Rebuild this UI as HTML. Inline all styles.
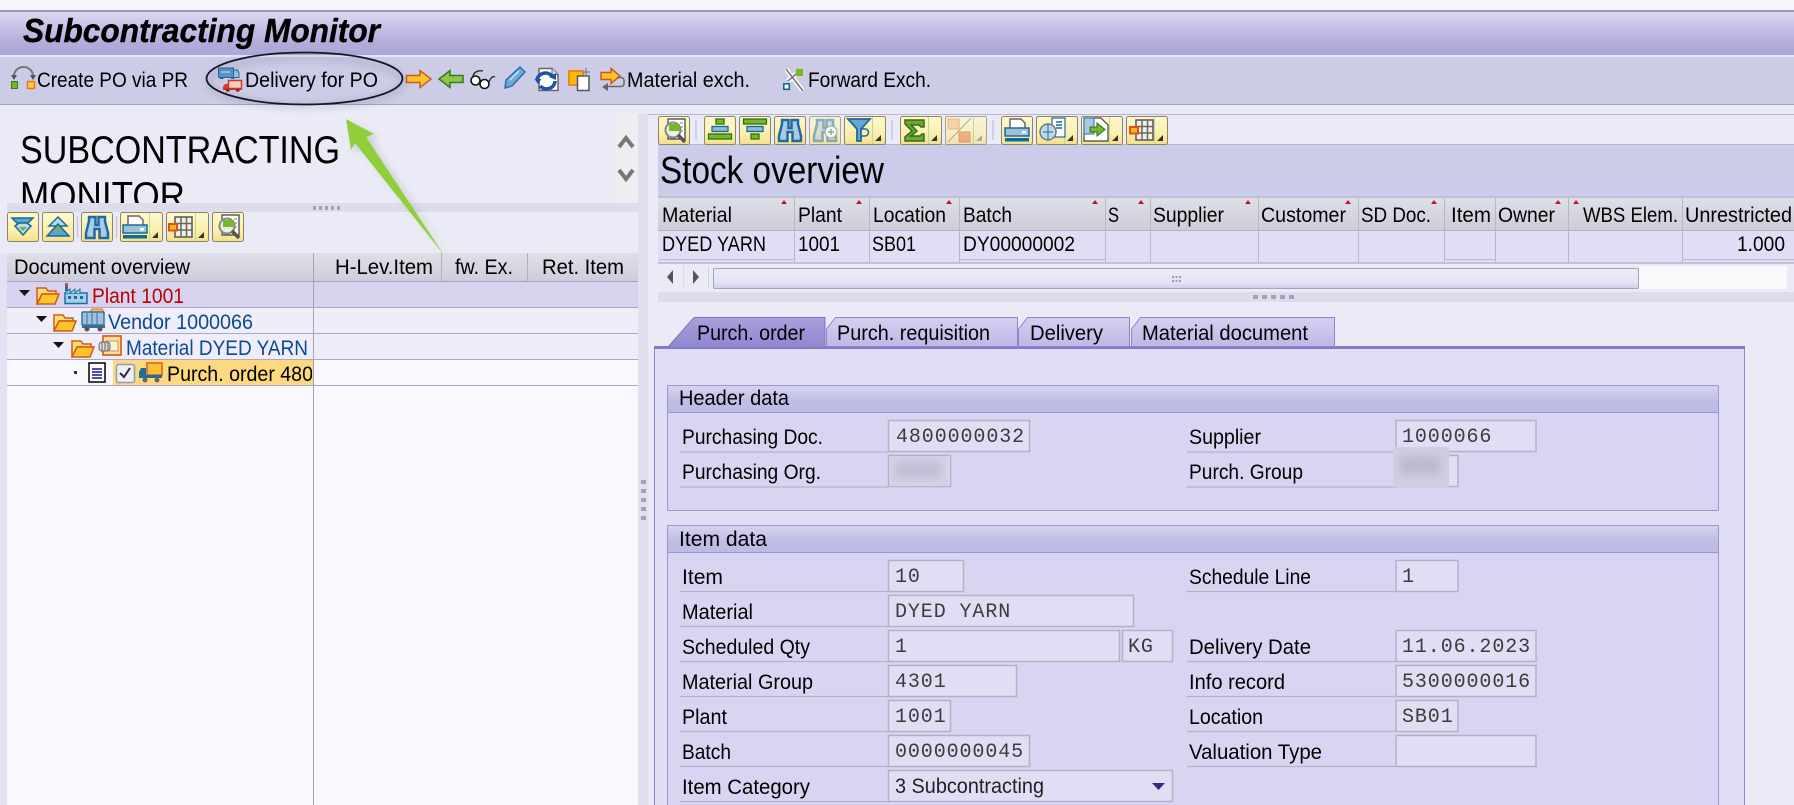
<!DOCTYPE html>
<html><head><meta charset="utf-8"><title>Subcontracting Monitor</title>
<style>
html,body{margin:0;padding:0;width:1794px;height:805px;overflow:hidden;background:#ebebf7}
svg{display:block;position:absolute;left:0;top:0}
text{font-family:"Liberation Sans",sans-serif;font-size:21px;fill:#000;white-space:pre}
.m{font-family:"Liberation Mono",monospace;font-size:20px;letter-spacing:.9px;fill:#3c3c3c}
.b{fill:#0a4a96}
.r{shape-rendering:crispEdges}
.fd{fill:#e0def5;stroke:#b3b1c4;stroke-width:1.5}
.ul{stroke:#b5b3c4;stroke-width:1.2}
</style></head><body>
<svg width="1794" height="805" viewBox="0 0 1794 805" xmlns="http://www.w3.org/2000/svg">
<defs>
<linearGradient id="gT" x1="0" y1="0" x2="0" y2="1"><stop offset="0" stop-color="#dad7f0"/><stop offset=".75" stop-color="#b1abda"/><stop offset="1" stop-color="#aea8d8"/></linearGradient>
<linearGradient id="gB" x1="0" y1="0" x2="0" y2="1"><stop offset="0" stop-color="#fdf8cf"/><stop offset=".6" stop-color="#fbf0ae"/><stop offset="1" stop-color="#f4e08c"/></linearGradient>
<linearGradient id="gH" x1="0" y1="0" x2="0" y2="1"><stop offset="0" stop-color="#dfdfe8"/><stop offset="1" stop-color="#cdcdd9"/></linearGradient>
<linearGradient id="gG" x1="0" y1="0" x2="0" y2="1"><stop offset="0" stop-color="#d6d3f0"/><stop offset=".6" stop-color="#bfbce5"/><stop offset="1" stop-color="#bdbae4"/></linearGradient>
<linearGradient id="gTa" x1="0" y1="0" x2="0" y2="1"><stop offset="0" stop-color="#a9a1dd"/><stop offset="1" stop-color="#8f86d0"/></linearGradient>
<linearGradient id="gTb" x1="0" y1="0" x2="0" y2="1"><stop offset="0" stop-color="#d4d0f0"/><stop offset="1" stop-color="#bdb8e6"/></linearGradient>
<linearGradient id="gS" x1="0" y1="0" x2="0" y2="1"><stop offset="0" stop-color="#ececf8"/><stop offset=".7" stop-color="#e4e2f5"/><stop offset="1" stop-color="#cfcde6"/></linearGradient>
<filter id="bl" x="-30%" y="-30%" width="160%" height="160%"><feGaussianBlur stdDeviation="4"/></filter>
<filter id="sh" x="-20%" y="-40%" width="140%" height="180%"><feGaussianBlur stdDeviation="4"/></filter>
<clipPath id="cH"><rect x="0" y="105" width="614" height="98"/></clipPath>
<clipPath id="cP"><rect x="113" y="360" width="199" height="25"/></clipPath>
<symbol id="iFold" viewBox="0 0 24 18" overflow="visible"><path d="M1 1h9l2 3h8v3H6L1 17z" fill="#fde07a" stroke="#d4581a" stroke-width="1.5"/><path d="M1 17L6 7h17l-4 10z" fill="#fdc52c" stroke="#d4581a" stroke-width="1.5"/></symbol>
<symbol id="iBin" viewBox="0 0 24 24" overflow="visible"><path d="M4 2h6.500v8h3V2H20v4l3 12v5h-8.500v-9h-5v9H1v-5L4 6z" fill="#a9cbe4" stroke="#1f6aa5" stroke-width="2.500"/></symbol>
<symbol id="iPrn" viewBox="0 0 26 24" overflow="visible"><path d="M6 1h11l4 4v6H6z" fill="#fff" stroke="#666" stroke-width="1.5"/><rect x="1" y="10" width="24" height="8" fill="#9ec0db" stroke="#1a6a96" stroke-width="1.5"/><rect x="18" y="13" width="4" height="2.5" fill="#fff"/><rect x="1" y="20" width="24" height="3.5" fill="#0e6a96"/></symbol>
<symbol id="iGrid" viewBox="0 0 26 24" overflow="visible"><rect x="7" y="2" width="17" height="20" fill="#f3f0e0" stroke="#555" stroke-width="1.5"/><path d="M7 8.5h17M7 15h17M13 2v20M18.5 2v20" stroke="#666" stroke-width="1.5"/><rect x="1" y="9" width="8" height="6.5" fill="#fdb913" stroke="#e0521a" stroke-width="2"/></symbol>
<symbol id="iZoom" viewBox="0 0 24 26" overflow="visible"><rect x="5" y="1" width="17" height="20" fill="#fff" stroke="#444" stroke-width="1.3"/><path d="M17 5h3M17 9h3M17 13h3" stroke="#777"/><circle cx="10" cy="12" r="7.5" fill="#e8f2e0" stroke="#888" stroke-width="2"/><rect x="6" y="6" width="11" height="7" fill="#76b82a"/><path d="M15 17l7 7" stroke="#555" stroke-width="3.5"/></symbol>
</defs>

<!-- top chrome -->
<rect class="r" x="0" y="0" width="1794" height="10" fill="#f5f5fa"/>
<rect class="r" x="0" y="10" width="1794" height="2" fill="#9c96c6"/>
<rect class="r" x="0" y="12" width="1794" height="43" fill="url(#gT)"/>
<rect class="r" x="0" y="55" width="1794" height="2" fill="#e6e5f4"/>
<rect class="r" x="0" y="57" width="1794" height="47" fill="#cdcce6"/>
<rect class="r" x="0" y="104" width="1794" height="1" fill="#a5a3c4"/>
<text x="23" y="42" font-weight="bold" font-style="italic" style="font-size:33px;stroke:#000;stroke-width:.4px" textLength="357" lengthAdjust="spacingAndGlyphs">Subcontracting Monitor</text>

<text x="37" y="87" textLength="151" lengthAdjust="spacingAndGlyphs">Create PO via PR</text>
<text x="245" y="87" textLength="133" lengthAdjust="spacingAndGlyphs">Delivery for PO</text>
<text x="627" y="87" textLength="123" lengthAdjust="spacingAndGlyphs">Material exch.</text>
<text x="808" y="87" textLength="123" lengthAdjust="spacingAndGlyphs">Forward Exch.</text>

<!-- toolbar icons -->
<g>
<path d="M14 77v-1a9.500 9 0 0 1 19 0v1" fill="none" stroke="#777" stroke-width="2"/>
<path d="M11 75h6l-3 5zM30 75h6l-3 5z" fill="#555"/>
<rect x="11.500" y="81.500" width="6" height="7" fill="#74b52f" stroke="#3c7a1c"/>
<rect x="27.500" y="81.500" width="7" height="7" fill="#fbd030" stroke="#ea7a20" stroke-width="1.5"/>
<!-- delivery -->
<rect x="218.500" y="68" width="15" height="9.500" fill="#5b97c6" stroke="#1d6ba3"/><rect x="221" y="71" width="9" height="2" fill="#9cc4e2"/>
<path d="M233.500 70h4l1.500 3v4.500h-5.500z" fill="#8fc2e2" stroke="#1d6ba3"/>
<rect x="220" y="77" width="3.500" height="2" fill="#1d6ba3"/><rect x="231" y="77" width="3.500" height="2" fill="#1d6ba3"/>
<rect x="228.500" y="80.500" width="13" height="8" fill="#f6cdbd" stroke="#c83a20" stroke-width="1.500"/>
<path d="M228 84h-3l-2 2.500v2.500h5z" fill="#d5412a"/>
<rect x="223" y="88" width="19" height="2" fill="#c83a20"/><rect x="226" y="89.500" width="3.500" height="2" fill="#7a2010"/><rect x="236" y="89.500" width="3.500" height="2" fill="#7a2010"/>
<!-- arrows -->
<path d="M406.500 75.500h13.500v-5l11 8.500-11 8.500v-5h-13.500z" fill="#fdc52c" stroke="#d6561f" stroke-width="1.500"/>
<path d="M463 75.500h-13v-5l-11 8.500 11 8.500v-5h13z" fill="#90c44a" stroke="#2e7d1e" stroke-width="1.500"/>
<!-- glasses -->
<circle cx="475.500" cy="80.500" r="4.500" fill="#fff" stroke="#111" stroke-width="1.600"/><circle cx="484.500" cy="84" r="4.500" fill="#fff" stroke="#111" stroke-width="1.600"/>
<path d="M473 76c1-4 5-6 10-5M489 82c2-5 4-6 6-5" fill="none" stroke="#222" stroke-width="1.300"/>
<!-- pencil -->
<path d="M505 88l1-8 14-13 5 5-13 14z" fill="#6fa9da" stroke="#2c6fa9" stroke-width="1.500"/><path d="M510 80l9-9" stroke="#c7e0f3" stroke-width="1.500"/>
<!-- refresh doc -->
<path d="M539 68.500h13l6 6v16h-19z" fill="#fff" stroke="#666" stroke-width="1.500"/>
<path d="M552 68.500v6h6" fill="#ddd" stroke="#666"/>
<path d="M537 80a8.500 8 0 0 1 15-4" fill="none" stroke="#2050a8" stroke-width="3.500"/><path d="M555 81a8.500 8 0 0 1-15 5" fill="none" stroke="#2050a8" stroke-width="3.500"/>
<path d="M534.500 79h7l-3.500 5zM549 77l7-4v7z" fill="#2050a8"/>
<!-- copy -->
<rect x="569" y="71" width="14" height="14" fill="#fdb913" stroke="#ee8a10" stroke-width="2"/>
<path d="M577.500 76h11.500v14.500h-11.500z" fill="#fff" stroke="#555" stroke-width="1.500"/>
<path d="M586 68v8M582 72h8" stroke="#888" stroke-width="1.500"/>
<!-- exchange -->
<path d="M601 72.500h10v-4l9 7.500-9 7.500v-4h-10z" fill="#fdc52c" stroke="#d6561f" stroke-width="1.500"/>
<path d="M617 77.500h4a3 3 0 0 1 3 3v3a3 3 0 0 1-3 3h-15" fill="none" stroke="#666" stroke-width="1.500"/><path d="M608 83v8l-6-4z" fill="#666"/>
<!-- forward -->
<path d="M786 69l17 22M788 81l8-7" stroke="#fff" stroke-width="4.500"/><path d="M786 69l17 22M788 81l8-7" stroke="#777" stroke-width="1.500"/>
<rect x="796" y="69" width="7" height="7" fill="#76b82a"/>
<rect x="783.800" y="83.800" width="5.500" height="5.500" fill="#fff" stroke="#0a6a9a" stroke-width="1.600"/>
</g>

<!-- left panel -->
<g clip-path="url(#cH)">
<text x="20" y="163" style="font-size:39px" textLength="320" lengthAdjust="spacingAndGlyphs">SUBCONTRACTING</text>
<text x="20" y="209" style="font-size:39px" textLength="165" lengthAdjust="spacingAndGlyphs">MONITOR</text>
</g>
<rect class="r" x="614" y="114" width="24" height="89" fill="#eeeef2"/>
<rect class="r" x="638" y="114" width="10" height="691" fill="#dfdff0"/>
<path d="M619 147l7-9 7 9M619 170l7 9 7-9" fill="none" stroke="#777" stroke-width="4"/>
<rect class="r" x="7" y="203" width="631" height="9" fill="#dcdcec"/>
<path d="M313 206h3v4h-3zM319 206h3v4h-3zM325 206h3v4h-3zM331 206h3v4h-3zM337 206h3v4h-3z" fill="#a3a1b8"/>

<!-- left buttons -->
<g fill="url(#gB)" stroke="#8f8462" stroke-width="1">
<rect x="7.500" y="212.500" width="31" height="29" rx="2"/>
<rect x="42.500" y="212.500" width="31" height="29" rx="2"/>
<rect x="81.500" y="212.500" width="31" height="29" rx="2"/>
<rect x="120.500" y="212.500" width="42" height="29" rx="2"/>
<rect x="166.500" y="212.500" width="42" height="29" rx="2"/>
<rect x="212.500" y="212.500" width="31" height="29" rx="2"/>
</g>
<path d="M149.500 213v28M195.500 213v28" stroke="#bcd89a"/>
<path d="M77.500 216v22M116.500 216v22" stroke="#c8c8d8" stroke-width="1.500"/>
<path d="M152 238h6v-6zM198 238h6v-6z" fill="#333"/>
<path d="M12 218h21l-5 5h-11z" fill="#5aa4d0" stroke="#1a6a96" stroke-width="1.500"/><path d="M15 226l8 9 8-9-4-3h-8z" fill="#bcd8ec" stroke="#1a6a96" stroke-width="1.500"/><path d="M19 227l4 4 4-4z" fill="#76b82a"/>
<path d="M58 217l9 9H49z" fill="#bcd8ec" stroke="#1a6a96" stroke-width="1.500"/><path d="M58 224l-11 12h22z" fill="#5aa4d0" stroke="#1a6a96" stroke-width="1.500"/><path d="M58 226l-4 4h8z" fill="#76b82a"/>
<use href="#iBin" x="85" y="215" width="24" height="24"/>
<use href="#iPrn" x="122" y="215" width="26" height="24"/>
<use href="#iGrid" x="168" y="215" width="26" height="24"/>
<use href="#iZoom" x="217" y="214" width="24" height="26"/>

<!-- tree -->
<rect class="r" x="0" y="253" width="7" height="552" fill="#e2e2f2"/>
<rect class="r" x="7" y="253" width="631" height="29" fill="url(#gH)"/>
<rect class="r" x="7" y="282" width="631" height="25" fill="#d7d3ee"/>
<rect class="r" x="7" y="308" width="631" height="51" fill="#eeedf8"/>
<rect class="r" x="7" y="360" width="631" height="445" fill="#f8f8fd"/>
<rect class="r" x="7" y="281" width="631" height="1" fill="#a5a3c4"/>
<rect class="r" x="7" y="307" width="631" height="1" fill="#aaa7cc"/>
<rect class="r" x="7" y="333" width="631" height="1" fill="#aaa7cc"/>
<rect class="r" x="7" y="359" width="631" height="1" fill="#aaa7cc"/>
<rect class="r" x="7" y="385" width="631" height="1" fill="#aaa7cc"/>
<rect class="r" x="313" y="253" width="1" height="552" fill="#a5a3b8"/>
<rect class="r" x="441" y="253" width="1" height="28" fill="#b0b0bf"/>
<rect class="r" x="527" y="253" width="1" height="28" fill="#b0b0bf"/>
<text x="14" y="274" textLength="176" lengthAdjust="spacingAndGlyphs">Document overview</text>
<text x="335" y="274" textLength="98" lengthAdjust="spacingAndGlyphs">H-Lev.Item</text>
<text x="455" y="274" textLength="58" lengthAdjust="spacingAndGlyphs">fw. Ex.</text>
<text x="542" y="274" textLength="82" lengthAdjust="spacingAndGlyphs">Ret. Item</text>

<rect class="r" x="113" y="360" width="200" height="25" fill="#fcd87f"/>
<path d="M19 290h11l-5.500 6zM36 316h11l-5.500 6zM53 342h11l-5.500 6z" fill="#111"/>
<use href="#iFold" x="36" y="287" width="24" height="18"/>
<use href="#iFold" x="53" y="314" width="24" height="18"/>
<use href="#iFold" x="71" y="340" width="24" height="18"/>
<path d="M65 293h22v10.500H65z" fill="#a6d0e8" stroke="#1d6fa5" stroke-width="1.500"/><path d="M65 293l5-4 0 4 5-4 0 4 5-4 0 4" fill="#a6d0e8" stroke="#1d6fa5"/><rect x="65" y="284" width="3" height="7" fill="#2a6fa8"/><rect x="65" y="283" width="3" height="2.500" fill="#e84a1a"/><path d="M68 296h3v3h-3zM74 296h3v3h-3zM80 296h3v3h-3z" fill="#1d6fa5"/>
<path d="M90 312h14l-2-3H92z" fill="#fbbf3a" stroke="#d6791a"/><rect x="82" y="312" width="22" height="13" rx="1" fill="#9cc2de" stroke="#37719e" stroke-width="1.500"/><path d="M87 313v11M92 313v11M97 313v11" stroke="#37719e"/><rect x="82" y="325" width="23" height="3" fill="#37719e"/><circle cx="87" cy="329" r="2.500" fill="#555"/><circle cx="100" cy="329" r="2.500" fill="#555"/>
<rect x="103" y="336" width="18" height="19" fill="#fde2a0" stroke="#e0651a" stroke-width="1.800"/><rect x="106" y="341" width="12" height="10" fill="#fff3c8" stroke="#c88"/><rect x="99" y="342" width="11" height="9" rx="3" fill="#ddd" stroke="#666"/><path d="M102 342v9M105 342v9M108 342v9" stroke="#666"/>
<rect x="74" y="371" width="3" height="3" fill="#333"/>
<rect x="89" y="363" width="16" height="19" fill="#fff" stroke="#000" stroke-width="1.500"/><path d="M92 369h10M92 372h10M92 375h10M92 378h10" stroke="#14148c" stroke-width="1.600"/>
<rect x="116.500" y="364.500" width="18" height="18" rx="2" fill="#eeeef6" stroke="#9a9aa6" stroke-width="1.500"/><path d="M120 373l4 4 6-9" fill="none" stroke="#2a2a40" stroke-width="2"/>
<rect x="147" y="363" width="15" height="12" fill="#fbc03a" stroke="#d9671a" stroke-width="1.600"/><path d="M146 368h-5l-2 4v6h23v-3h-16z" fill="#1f6f9c"/><circle cx="145" cy="380" r="2.500" fill="#666"/><circle cx="157" cy="380" r="2.500" fill="#666"/>
<text x="92" y="303" style="fill:#b80000" textLength="92" lengthAdjust="spacingAndGlyphs">Plant 1001</text>
<text class="b" x="108" y="329" textLength="145" lengthAdjust="spacingAndGlyphs">Vendor 1000066</text>
<text class="b" x="126" y="355" textLength="182" lengthAdjust="spacingAndGlyphs">Material DYED YARN</text>
<g clip-path="url(#cP)"><text x="167" y="381" textLength="146" lengthAdjust="spacingAndGlyphs">Purch. order 480</text></g>

<!-- vertical sash -->
<rect class="r" x="648" y="105" width="10" height="700" fill="#ebebf7"/>
<path d="M641 480h5v4h-5zM641 489h5v4h-5zM641 498h5v4h-5zM641 507h5v4h-5zM641 516h5v4h-5z" fill="#a3a1b8"/>

<!-- right toolbar -->
<rect class="r" x="648" y="114" width="1146" height="1" fill="#b7b5d3"/>
<rect class="r" x="658" y="145" width="1136" height="51" fill="#cdcbea"/>
<rect class="r" x="658" y="144" width="1136" height="1" fill="#b7b5d3"/>
<rect class="r" x="658" y="196" width="1136" height="2" fill="#c0bedd"/>
<g fill="url(#gB)" stroke="#8f8462" stroke-width="1">
<rect x="658.500" y="116.500" width="31" height="28" rx="2"/>
<rect x="704.500" y="116.500" width="31" height="28" rx="2"/>
<rect x="739.500" y="116.500" width="31" height="28" rx="2"/>
<rect x="774.500" y="116.500" width="31" height="28" rx="2"/>
<rect x="809.500" y="116.500" width="31" height="28" rx="2" opacity=".7"/>
<rect x="844.500" y="116.500" width="41" height="28" rx="2"/>
<rect x="900.500" y="116.500" width="41" height="28" rx="2"/>
<rect x="945.500" y="116.500" width="41" height="28" rx="2" opacity=".7"/>
<rect x="1001.500" y="116.500" width="31" height="28" rx="2"/>
<rect x="1036.500" y="116.500" width="41" height="28" rx="2"/>
<rect x="1081.500" y="116.500" width="41" height="28" rx="2"/>
<rect x="1126.500" y="116.500" width="41" height="28" rx="2"/>
</g>
<path d="M696 120v20M892 120v20M993 120v20" stroke="#c8c8d8" stroke-width="1.500"/>
<path d="M872.500 117v27M928.500 117v27M973.500 117v27M1064.500 117v27M1109.500 117v27M1154.500 117v27" stroke="#bcd89a"/>
<path d="M875 141h6v-6zM931 141h6v-6zM1067 141h6v-6zM1112 141h6v-6zM1157 141h6v-6z" fill="#333"/><path d="M976 141h6v-6z" fill="#aaa"/>
<use href="#iZoom" x="663" y="118" width="24" height="26"/>
<g stroke="#1a6a96" stroke-width="1.300"><rect x="716" y="119" width="8" height="5" fill="#76b82a" stroke="#2f6e18"/><rect x="712" y="126.500" width="16" height="5" fill="#8dbadf"/><rect x="708.500" y="134" width="23" height="5" fill="#76b82a" stroke="#2f6e18"/>
<rect x="743.500" y="119" width="23" height="5" fill="#76b82a" stroke="#2f6e18"/><rect x="747" y="126.500" width="16" height="5" fill="#8dbadf"/><rect x="751" y="134" width="8" height="5" fill="#76b82a" stroke="#2f6e18"/></g>
<use href="#iBin" x="778" y="118" width="24" height="24"/>
<g opacity=".5"><use href="#iBin" x="813" y="118" width="24" height="24"/><circle cx="831" cy="132" r="6" fill="#fff" stroke="#1f6aa5"/><path d="M828 132h6M831 129v6" stroke="#1f6aa5" stroke-width="1.500"/></g>
<path d="M848 119h22l-9 10v12h-4V129z" fill="#6aa5cf" stroke="#1a6aa0" stroke-width="1.800"/><path d="M861 129h4a3 3 0 0 1 0 7h-4" fill="none" stroke="#1a6aa0" stroke-width="1.500"/>
<path d="M905 120h19v7h-3l-2-2h-8l6 6-6 5h9l2-2h2v7h-19v-4l7-6-7-7z" fill="#6ea82c" stroke="#2f6e18" stroke-width="1.500"/>
<g opacity=".5"><rect x="948" y="119" width="11" height="10" fill="#f7b58a" stroke="#e0762a"/><rect x="959" y="132" width="11" height="10" fill="#e8744a" stroke="#c84a20"/><path d="M948 142l23-24" stroke="#666"/></g>
<use href="#iPrn" x="1004" y="118" width="26" height="24"/>
<rect x="1052" y="118" width="13" height="19" fill="#fff" stroke="#1a6a96" stroke-width="1.200"/><path d="M1056 122h6M1056 125h6M1056 128h6" stroke="#1a6a96" stroke-width="1.500"/><circle cx="1048" cy="132" r="8" fill="#bcd8ec" stroke="#777" stroke-width="1.500"/><path d="M1048 124v16M1043 132h10" stroke="#1a6a96"/>
<path d="M1084 118h17l7 7v16h-24z" fill="#fff" stroke="#444" stroke-width="1.200"/><rect x="1084" y="118" width="10" height="16" fill="#a6c8e2" stroke="#2a6fa8"/><path d="M1090 127h7v-4l8 6.500-8 6.500v-4h-7z" fill="#76b82a" stroke="#2f6e18"/>
<use href="#iGrid" x="1129" y="118" width="26" height="24"/>

<text x="660" y="183" style="font-size:38px" textLength="224" lengthAdjust="spacingAndGlyphs">Stock overview</text>

<!-- table -->
<rect class="r" x="658" y="198" width="1136" height="32" fill="url(#gH)"/>
<rect class="r" x="658" y="230" width="1136" height="32" fill="#e0def5"/>
<rect class="r" x="658" y="230" width="1136" height="1" fill="#b5b3c8"/>
<rect class="r" x="658" y="262" width="1136" height="2" fill="#c4c2da"/>
<g class="r" fill="#b8b6ca"><rect x="794" y="198" width="1" height="64"/><rect x="869" y="198" width="1" height="64"/><rect x="959" y="198" width="1" height="64"/><rect x="1105" y="198" width="1" height="64"/><rect x="1150" y="198" width="1" height="64"/><rect x="1258" y="198" width="1" height="64"/><rect x="1358" y="198" width="1" height="64"/><rect x="1444" y="198" width="1" height="64"/><rect x="1495" y="198" width="1" height="64"/><rect x="1568" y="198" width="1" height="64"/><rect x="1682" y="198" width="1" height="64"/></g>
<g class="r" fill="#bcbad0"><rect x="659" y="259" width="135" height="1"/><rect x="960" y="259" width="145" height="1"/><rect x="1445" y="259" width="50" height="1"/><rect x="1683" y="259" width="111" height="1"/></g>
<path d="M781 204l3-4 3 4zM856 204l3-4 3 4zM946 204l3-4 3 4zM1092 204l3-4 3 4zM1138 204l3-4 3 4zM1245 204l3-4 3 4zM1345 204l3-4 3 4zM1431 204l3-4 3 4zM1555 204l3-4 3 4zM1573 204l3-4 3 4z" fill="#c8102e"/>
<text x="662" y="222" textLength="70" lengthAdjust="spacingAndGlyphs">Material</text>
<text x="798" y="222" textLength="44" lengthAdjust="spacingAndGlyphs">Plant</text>
<text x="873" y="222" textLength="73" lengthAdjust="spacingAndGlyphs">Location</text>
<text x="963" y="222" textLength="49" lengthAdjust="spacingAndGlyphs">Batch</text>
<text x="1108" y="222" textLength="11" lengthAdjust="spacingAndGlyphs">S</text>
<text x="1153" y="222" textLength="71" lengthAdjust="spacingAndGlyphs">Supplier</text>
<text x="1261" y="222" textLength="85" lengthAdjust="spacingAndGlyphs">Customer</text>
<text x="1361" y="222" textLength="70" lengthAdjust="spacingAndGlyphs">SD Doc.</text>
<text x="1451" y="222" textLength="40" lengthAdjust="spacingAndGlyphs">Item</text>
<text x="1498" y="222" textLength="57" lengthAdjust="spacingAndGlyphs">Owner</text>
<text x="1583" y="222" textLength="95" lengthAdjust="spacingAndGlyphs">WBS Elem.</text>
<text x="1685" y="222" textLength="107" lengthAdjust="spacingAndGlyphs">Unrestricted</text>
<text x="662" y="251" textLength="104" lengthAdjust="spacingAndGlyphs">DYED YARN</text>
<text x="798" y="251" textLength="42" lengthAdjust="spacingAndGlyphs">1001</text>
<text x="872" y="251" textLength="44" lengthAdjust="spacingAndGlyphs">SB01</text>
<text x="963" y="251" textLength="112" lengthAdjust="spacingAndGlyphs">DY00000002</text>
<text x="1737" y="251" textLength="48" lengthAdjust="spacingAndGlyphs">1.000</text>

<!-- table scrollbar -->
<rect class="r" x="658" y="264" width="1136" height="28" fill="#ebebf7"/>
<rect class="r" x="1639" y="266" width="148" height="23" fill="#f9f9fc"/>
<rect class="r" x="683" y="266" width="1" height="23" fill="#d8d8e8"/><rect class="r" x="708" y="266" width="1" height="23" fill="#cfcfe2"/>
<rect x="713.500" y="268.500" width="925" height="20" rx="1" fill="url(#gS)" stroke="#a5a3c4"/>
<path d="M673 270v14l-6-7zM693 270v14l6-7z" fill="#555"/>
<path d="M1172 276h2v2h-2zM1175.500 276h2v2h-2zM1179 276h2v2h-2zM1172 280h2v2h-2zM1175.500 280h2v2h-2zM1179 280h2v2h-2z" fill="#9a98b8"/>
<rect class="r" x="658" y="292" width="1136" height="10" fill="#dcdcec"/>
<path d="M1253 295h5v4h-5zM1262 295h5v4h-5zM1271 295h5v4h-5zM1280 295h5v4h-5zM1289 295h5v4h-5z" fill="#a3a1b8"/>

<!-- panel -->
<rect x="654.500" y="347.500" width="1090" height="470" fill="#e0def5" stroke="#9088cc"/>
<rect class="r" x="654" y="346" width="1091" height="3" fill="#8579c8"/>
<!-- tabs -->
<path d="M668 347L694 317.500H825V348H668z" fill="url(#gTa)" stroke="#7d74c4"/>
<path d="M826.500 346.500V329l9-11.500H1017.500V346.500z" fill="url(#gTb)" stroke="#8d86c9"/>
<path d="M1018.500 346.500V329l9-11.500H1129.500V346.500z" fill="url(#gTb)" stroke="#8d86c9"/>
<path d="M1131.500 346.500V329l9-11.500H1334.500V346.500z" fill="url(#gTb)" stroke="#8d86c9"/>
<text x="697" y="340" textLength="108" lengthAdjust="spacingAndGlyphs">Purch. order</text>
<text x="837" y="340" textLength="153" lengthAdjust="spacingAndGlyphs">Purch. requisition</text>
<text x="1030" y="340" textLength="73" lengthAdjust="spacingAndGlyphs">Delivery</text>
<text x="1142" y="340" textLength="166" lengthAdjust="spacingAndGlyphs">Material document</text>

<!-- header group -->
<rect x="667.500" y="385.500" width="1051" height="125" rx="1" fill="#d8d5f3" stroke="#9c95d5"/>
<rect x="668" y="386" width="1050" height="26" fill="url(#gG)"/>
<rect class="r" x="667" y="412" width="1052" height="1" fill="#9c95d5"/>
<text x="679" y="405" textLength="110" lengthAdjust="spacingAndGlyphs">Header data</text>

<path class="ul" d="M680 452h208M680 487h208M1187 452h209M1187 487h209"/>
<text x="682" y="444" textLength="141" lengthAdjust="spacingAndGlyphs">Purchasing Doc.</text>
<text x="682" y="479" textLength="139" lengthAdjust="spacingAndGlyphs">Purchasing Org.</text>
<text x="1189" y="444" textLength="72" lengthAdjust="spacingAndGlyphs">Supplier</text>
<text x="1189" y="479" textLength="114" lengthAdjust="spacingAndGlyphs">Purch. Group</text>
<rect class="fd" x="888.500" y="420.500" width="141" height="31"/>
<rect class="fd" x="888.500" y="455.500" width="62" height="31"/>
<rect class="fd" x="1396" y="420.500" width="140" height="31"/>
<rect class="fd" x="1396" y="455.500" width="62" height="31"/>
<text class="m" x="896" y="442">4800000032</text>
<text class="m" x="1402" y="442">1000066</text>
<rect x="889" y="456" width="59" height="30" fill="#d2d0e4"/>
<rect x="896" y="462" width="44" height="16" fill="#c0bed4" filter="url(#bl)"/>
<rect class="r" x="1393" y="447" width="56" height="40" fill="#cfcde1"/>
<rect x="1400" y="456" width="40" height="18" fill="#bcbad0" filter="url(#bl)"/>

<!-- item group -->
<rect x="667.500" y="525.500" width="1051" height="290" rx="1" fill="#d8d5f3" stroke="#9c95d5"/>
<rect x="668" y="526" width="1050" height="26" fill="url(#gG)"/>
<rect class="r" x="667" y="552" width="1052" height="1" fill="#9c95d5"/>
<text x="679" y="546" textLength="88" lengthAdjust="spacingAndGlyphs">Item data</text>

<path class="ul" d="M680 591.500h208M680 626.500h208M680 661.500h208M680 696.500h208M680 731.500h208M680 766.500h208M680 801.500h208M1187 591.500h209M1187 661.500h209M1187 696.500h209M1187 731.500h209M1187 766.500h209"/>
<text x="682" y="584" textLength="41" lengthAdjust="spacingAndGlyphs">Item</text>
<text x="682" y="619" textLength="71" lengthAdjust="spacingAndGlyphs">Material</text>
<text x="682" y="654" textLength="128" lengthAdjust="spacingAndGlyphs">Scheduled Qty</text>
<text x="682" y="689" textLength="131" lengthAdjust="spacingAndGlyphs">Material Group</text>
<text x="682" y="724" textLength="45" lengthAdjust="spacingAndGlyphs">Plant</text>
<text x="682" y="759" textLength="49" lengthAdjust="spacingAndGlyphs">Batch</text>
<text x="682" y="794" textLength="128" lengthAdjust="spacingAndGlyphs">Item Category</text>
<text x="1189" y="584" textLength="122" lengthAdjust="spacingAndGlyphs">Schedule Line</text>
<text x="1189" y="654" textLength="122" lengthAdjust="spacingAndGlyphs">Delivery Date</text>
<text x="1189" y="689" textLength="96" lengthAdjust="spacingAndGlyphs">Info record</text>
<text x="1189" y="724" textLength="74" lengthAdjust="spacingAndGlyphs">Location</text>
<text x="1189" y="759" textLength="133" lengthAdjust="spacingAndGlyphs">Valuation Type</text>

<rect class="fd" x="888.500" y="560.500" width="75" height="31"/>
<rect class="fd" x="888.500" y="595.500" width="245" height="31"/>
<rect class="fd" x="888.500" y="630.500" width="231" height="31"/>
<rect class="fd" x="1122.500" y="630.500" width="50" height="31"/>
<rect class="fd" x="888.500" y="665.500" width="128" height="31"/>
<rect class="fd" x="888.500" y="700.500" width="62" height="31"/>
<rect class="fd" x="888.500" y="735.500" width="141" height="31"/>
<rect class="fd" x="888.500" y="770.500" width="284" height="31"/>
<rect class="fd" x="1396" y="560.500" width="62" height="31"/>
<rect class="fd" x="1396" y="630.500" width="140" height="31"/>
<rect class="fd" x="1396" y="665.500" width="140" height="31"/>
<rect class="fd" x="1396" y="700.500" width="62" height="31"/>
<rect class="fd" x="1396" y="735.500" width="140" height="31"/>
<text class="m" x="895" y="582">10</text>
<text class="m" x="895" y="617">DYED YARN</text>
<text class="m" x="895" y="652">1</text>
<text class="m" x="1128" y="652">KG</text>
<text class="m" x="895" y="687">4301</text>
<text class="m" x="895" y="722">1001</text>
<text class="m" x="895" y="757">0000000045</text>
<text x="895" y="793" style="fill:#222" textLength="149" lengthAdjust="spacingAndGlyphs">3 Subcontracting</text>
<path d="M1152 783h13l-6.500 7z" fill="#3c2a78"/>
<text class="m" x="1402" y="582">1</text>
<text class="m" x="1402" y="652">11.06.2023</text>
<text class="m" x="1402" y="687">5300000016</text>
<text class="m" x="1402" y="722">SB01</text>

<!-- annotations -->
<ellipse cx="306" cy="82" rx="97" ry="24" fill="none" stroke="#332f50" stroke-width="4" opacity=".22" filter="url(#sh)"/>
<ellipse cx="304.500" cy="78.500" rx="98" ry="26" fill="none" stroke="#16162a" stroke-width="1.800"/>
<path d="M352 124L378 138 372 142 449 258 362 148 355 154z" fill="#5a6a50" opacity=".22" filter="url(#sh)"/>
<path d="M346 119L374 134 366 137 444 255 355 143 351 150z" fill="#8fd03a"/>
</svg>
</body></html>
